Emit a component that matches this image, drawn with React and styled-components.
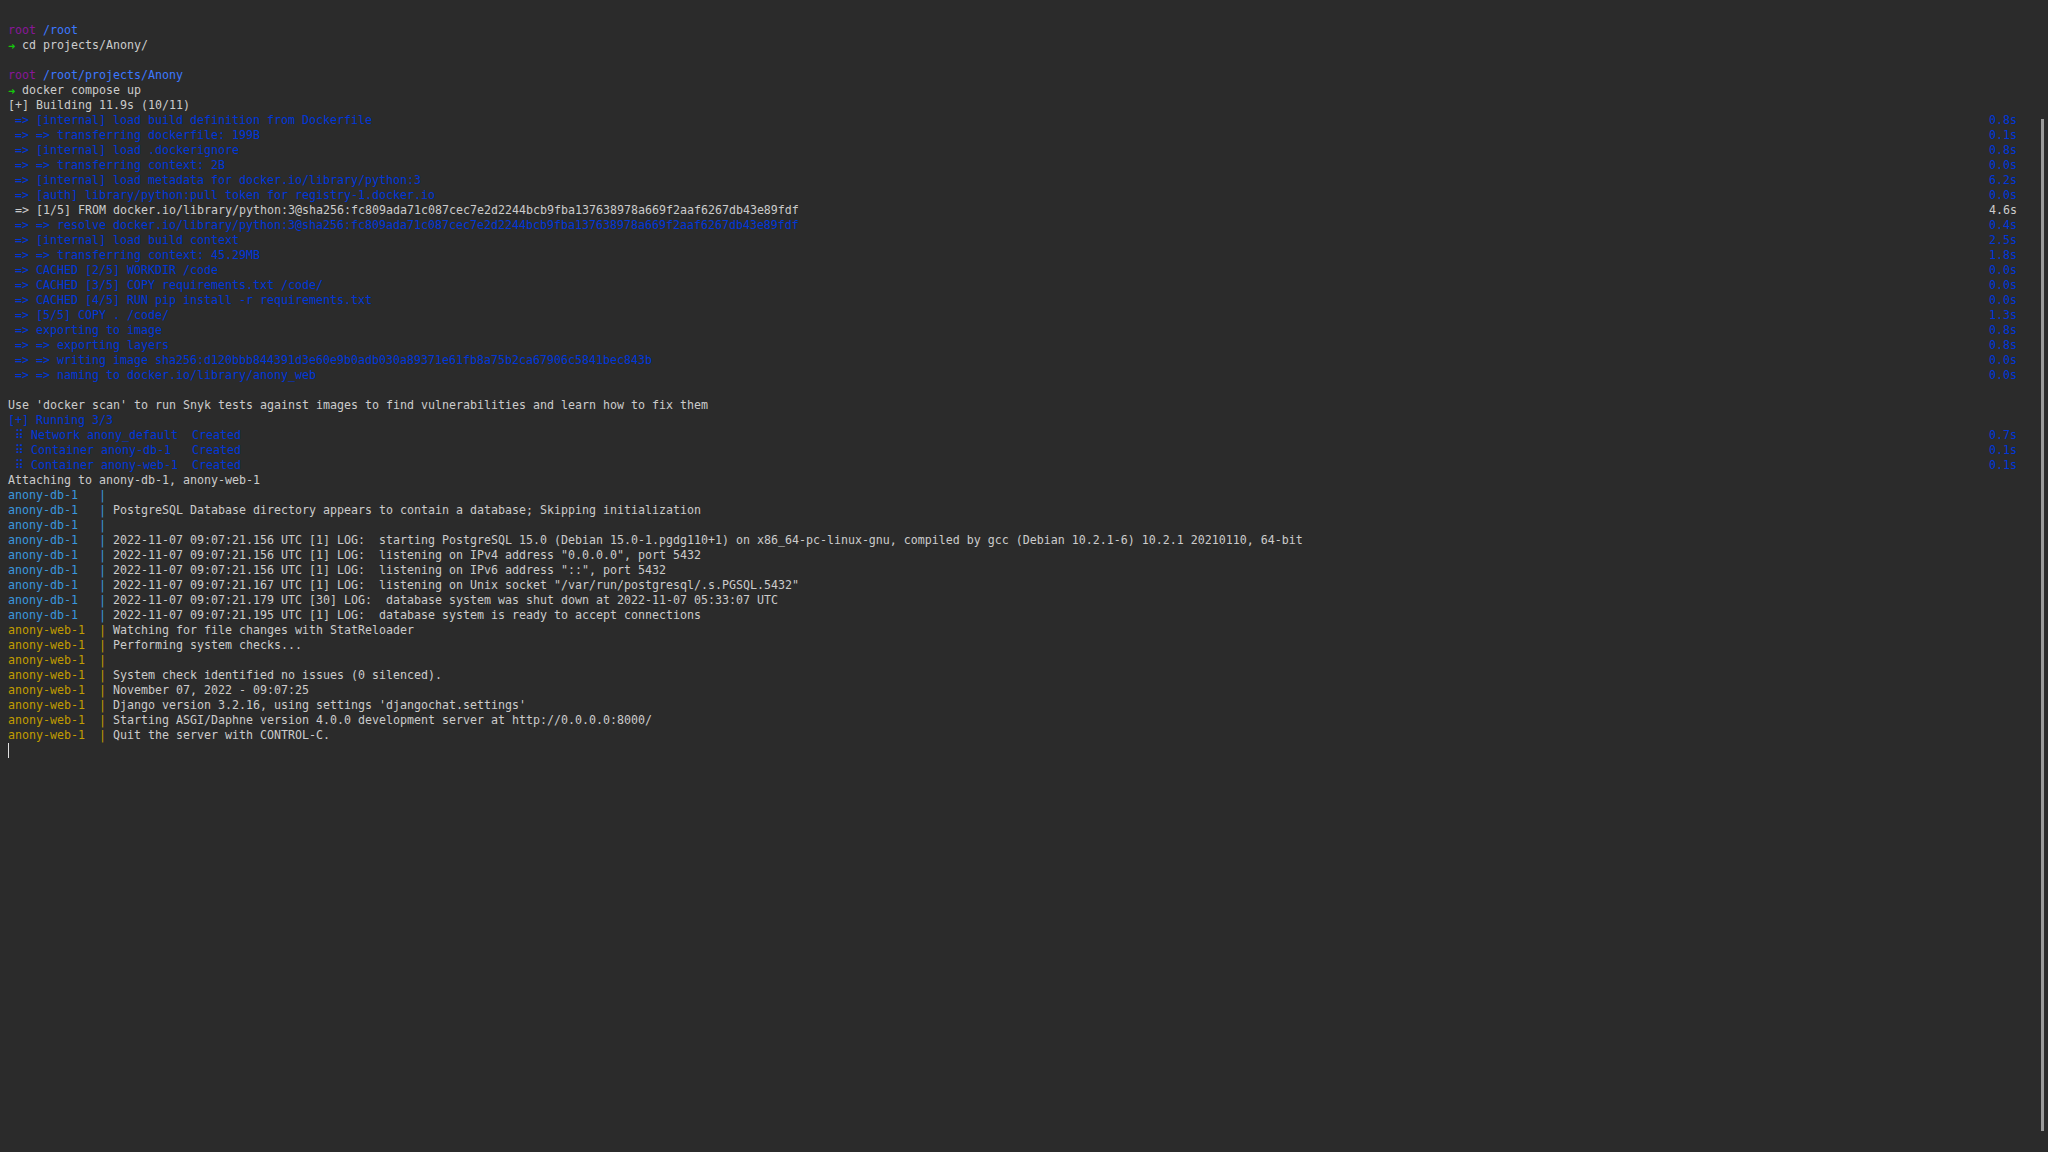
import React from "react";
import styled, { createGlobalStyle } from "styled-components";

const palette = {
  fg: "#cccccc",
  blue: "#0037da",
  purple: "#881798",
  path: "#3b78ff",
  green: "#16c60c",
  cyan: "#3a96dd",
  yellow: "#c19c00",
};

const GlobalStyle = createGlobalStyle`
  html, body {
    margin: 0;
    padding: 0;
    background: #2b2b2b;
  }
  #root {
    height: 100vh;
  }
`;

const Window = styled.div`
  display: flex;
  width: 100vw;
  height: 100vh;
  background-color: #2b2b2b;
  overflow: hidden;
`;

const Screen = styled.div`
  flex: 1;
  display: flex;
  flex-direction: column;
  padding: 8px 0 8px 8px;
  font-family: "DejaVu Sans Mono", "Liberation Mono", monospace;
  font-size: 11.63px;
  line-height: 15px;
  color: ${palette.fg};
`;

const Row = styled.div`
  display: flex;
  justify-content: space-between;
  height: 15px;
  white-space: pre;
`;

const Seg = styled.span`
  color: ${({ c }) => palette[c] || palette.fg};
`;

const Duration = styled.span`
  color: ${({ c }) => palette[c] || palette.blue};
`;

const Arrow = styled.span`
  display: inline-block;
  width: 14px;
  color: ${palette.green};
  font-family: "DejaVu Sans", sans-serif;
  font-size: 9px;
  font-weight: bold;
`;

const Cursor = styled.span`
  display: inline-block;
  width: 1px;
  height: 15px;
  background: #e0e0e0;
`;

const ScrollTrack = styled.div`
  width: 31px;
  display: flex;
  justify-content: flex-end;
  padding: 119px 4px 21px 0;
  box-sizing: border-box;
`;

const ScrollThumb = styled.div`
  width: 3px;
  background: #9a9a9a;
`;

const hash =
  "fc809ada71c087cec7e2d2244bcb9fba137638978a669f2aaf6267db43e89fdf";

const build = [
  [" => [internal] load build definition from Dockerfile", "0.8s"],
  [" => => transferring dockerfile: 199B", "0.1s"],
  [" => [internal] load .dockerignore", "0.8s"],
  [" => => transferring context: 2B", "0.0s"],
  [" => [internal] load metadata for docker.io/library/python:3", "6.2s"],
  [" => [auth] library/python:pull token for registry-1.docker.io", "0.0s"],
  [` => [1/5] FROM docker.io/library/python:3@sha256:${hash}`, "4.6s", "fg"],
  [` => => resolve docker.io/library/python:3@sha256:${hash}`, "0.4s"],
  [" => [internal] load build context", "2.5s"],
  [" => => transferring context: 45.29MB", "1.8s"],
  [" => CACHED [2/5] WORKDIR /code", "0.0s"],
  [" => CACHED [3/5] COPY requirements.txt /code/", "0.0s"],
  [" => CACHED [4/5] RUN pip install -r requirements.txt", "0.0s"],
  [" => [5/5] COPY . /code/", "1.3s"],
  [" => exporting to image", "0.8s"],
  [" => => exporting layers", "0.8s"],
  [
    " => => writing image sha256:d120bbb844391d3e60e9b0adb030a89371e61fb8a75b2ca67906c5841bec843b",
    "0.0s",
  ],
  [" => => naming to docker.io/library/anony_web", "0.0s"],
];

const containers = [
  [" \u283f Network anony_default  Created", "0.7s"],
  [" \u283f Container anony-db-1   Created", "0.1s"],
  [" \u283f Container anony-web-1  Created", "0.1s"],
];

const dbLogs = [
  "",
  "PostgreSQL Database directory appears to contain a database; Skipping initialization",
  "",
  "2022-11-07 09:07:21.156 UTC [1] LOG:  starting PostgreSQL 15.0 (Debian 15.0-1.pgdg110+1) on x86_64-pc-linux-gnu, compiled by gcc (Debian 10.2.1-6) 10.2.1 20210110, 64-bit",
  '2022-11-07 09:07:21.156 UTC [1] LOG:  listening on IPv4 address "0.0.0.0", port 5432',
  '2022-11-07 09:07:21.156 UTC [1] LOG:  listening on IPv6 address "::", port 5432',
  '2022-11-07 09:07:21.167 UTC [1] LOG:  listening on Unix socket "/var/run/postgresql/.s.PGSQL.5432"',
  "2022-11-07 09:07:21.179 UTC [30] LOG:  database system was shut down at 2022-11-07 05:33:07 UTC",
  "2022-11-07 09:07:21.195 UTC [1] LOG:  database system is ready to accept connections",
];

const webLogs = [
  "Watching for file changes with StatReloader",
  "Performing system checks...",
  "",
  "System check identified no issues (0 silenced).",
  "November 07, 2022 - 09:07:25",
  "Django version 3.2.16, using settings 'djangochat.settings'",
  "Starting ASGI/Daphne version 4.0.0 development server at http://0.0.0.0:8000/",
  "Quit the server with CONTROL-C.",
];

const Prompt = ({ path }) => (
  <Row>
    <span>
      <Seg c="purple">root</Seg> <Seg c="path">{path}</Seg>
    </span>
  </Row>
);

const Command = ({ children }) => (
  <Row>
    <span>
      <Arrow>{"\u279c"}</Arrow>
      <Seg>{children}</Seg>
    </span>
  </Row>
);

const LogLine = ({ name, c, text }) => (
  <Row>
    <span>
      <Seg c={c}>{name.padEnd(13, " ")}|</Seg>
      <Seg> {text}</Seg>
    </span>
  </Row>
);

const App = () => {
  return (
    <Window>
      <GlobalStyle />
      <Screen>
        <Row> </Row>
        <Prompt path="/root" />
        <Command>cd projects/Anony/</Command>
        <Row> </Row>
        <Prompt path="/root/projects/Anony" />
        <Command>docker compose up</Command>
        <Row>
          <Seg>[+] Building 11.9s (10/11)</Seg>
        </Row>
        {build.map(([text, time, c], i) => (
          <Row key={`build_${i}`}>
            <Seg c={c || "blue"}>{text}</Seg>
            <Duration c={c}>{time}</Duration>
          </Row>
        ))}
        <Row> </Row>
        <Row>
          <Seg>
            Use 'docker scan' to run Snyk tests against images to find
            vulnerabilities and learn how to fix them
          </Seg>
        </Row>
        <Row>
          <Seg c="blue">[+] Running 3/3</Seg>
        </Row>
        {containers.map(([text, time], i) => (
          <Row key={`ctr_${i}`}>
            <Seg c="blue">{text}</Seg>
            <Duration>{time}</Duration>
          </Row>
        ))}
        <Row>
          <Seg>Attaching to anony-db-1, anony-web-1</Seg>
        </Row>
        {dbLogs.map((text, i) => (
          <LogLine key={`db_${i}`} name="anony-db-1" c="cyan" text={text} />
        ))}
        {webLogs.map((text, i) => (
          <LogLine key={`web_${i}`} name="anony-web-1" c="yellow" text={text} />
        ))}
        <Row>
          <Cursor />
        </Row>
      </Screen>
      <ScrollTrack>
        <ScrollThumb />
      </ScrollTrack>
    </Window>
  );
};

export default App;
